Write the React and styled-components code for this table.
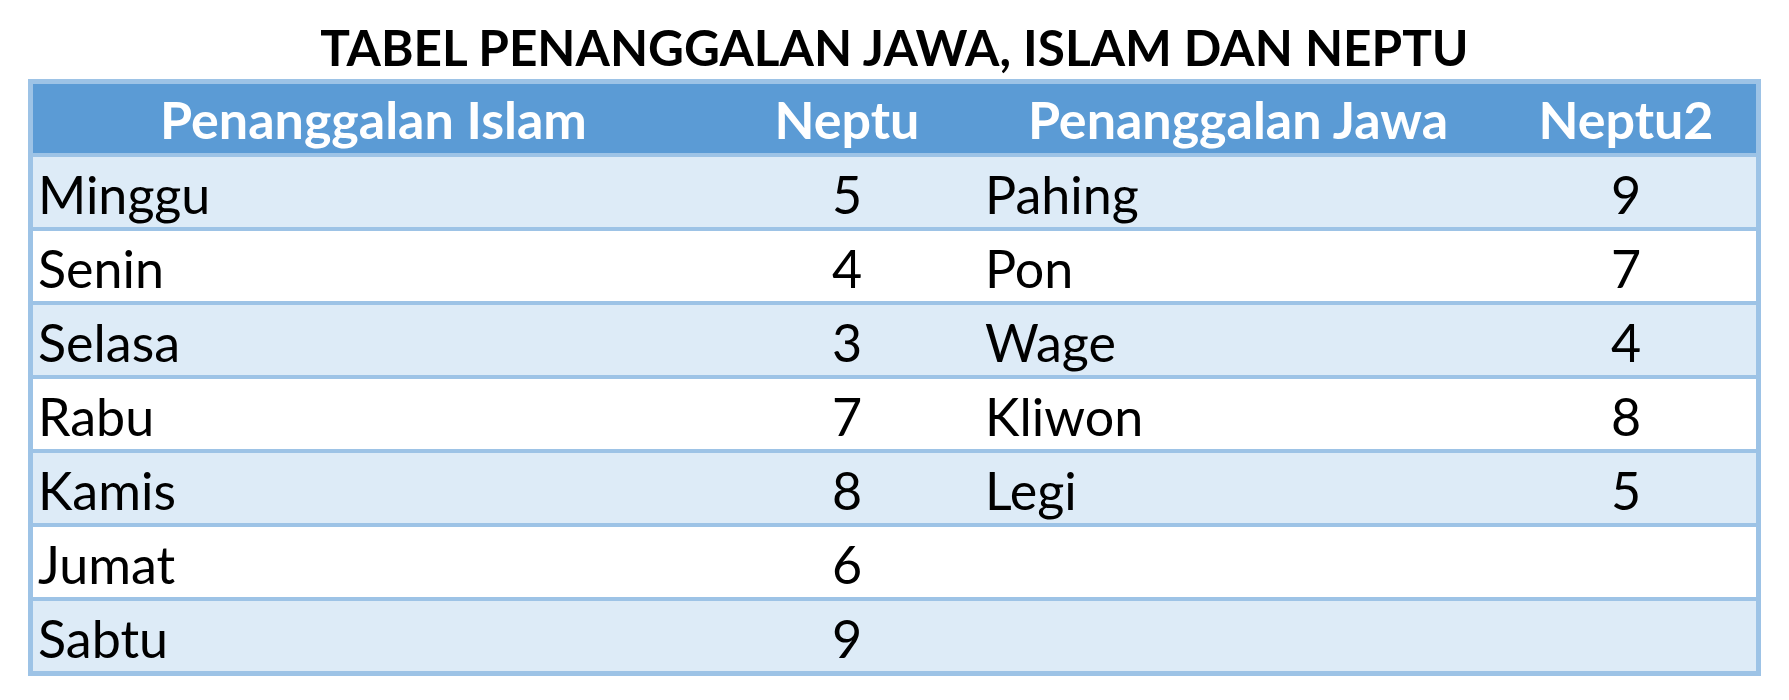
import React from 'react';
import styled, { createGlobalStyle } from 'styled-components';

const GlobalStyle = createGlobalStyle`
  html, body {
    margin: 0;
    padding: 0;
    background: #ffffff;
  }
  body {
    font-family: Lato, "Open Sans", "Liberation Sans", sans-serif;
  }
`;

const Page = styled.div`
  width: 1789px;
  padding-top: 16px;
  display: flex;
  flex-direction: column;
  align-items: center;
`;

const Title = styled.h1`
  margin: 0;
  font-size: 49.5px;
  line-height: 63px;
  font-weight: 700;
  color: #000000;
  text-align: center;
`;

const Table = styled.div`
  width: 1733px;
  box-sizing: border-box;
  border: 5px solid #9dc3e6;
  display: flex;
  flex-direction: column;
`;

const Row = styled.div`
  display: grid;
  grid-template-columns: 681px 266px 516px 1fr;
  height: ${(p) => (p.$header ? '69px' : '70px')};
  background: ${(p) => {
    if (p.$header) return '#5b9bd5';
    return p.$shade ? '#ddebf7' : '#ffffff';
  }};
  border-top: ${(p) => (p.$header ? 'none' : '4px solid #9dc3e6')};
`;

const Cell = styled.div`
  display: flex;
  align-items: center;
  justify-content: ${(p) => (p.$center ? 'center' : 'flex-start')};
  padding-left: ${(p) => (p.$center ? '0' : '5px')};
  padding-top: ${(p) => (p.$header ? '0' : '4px')};
  font-size: 52px;
  font-weight: ${(p) => (p.$header ? 700 : 400)};
  color: ${(p) => (p.$header ? '#ffffff' : '#000000')};
  white-space: nowrap;
`;

const islam = [
  ['Minggu', 5],
  ['Senin', 4],
  ['Selasa', 3],
  ['Rabu', 7],
  ['Kamis', 8],
  ['Jumat', 6],
  ['Sabtu', 9],
];

const jawa = [
  ['Pahing', 9],
  ['Pon', 7],
  ['Wage', 4],
  ['Kliwon', 8],
  ['Legi', 5],
];

const App = () => (
  <>
    <GlobalStyle />
    <Page>
      <Title>TABEL PENANGGALAN JAWA, ISLAM DAN NEPTU</Title>
      <Table>
        <Row $header>
          <Cell $header $center>Penanggalan Islam</Cell>
          <Cell $header $center>Neptu</Cell>
          <Cell $header $center>Penanggalan Jawa</Cell>
          <Cell $header $center>Neptu2</Cell>
        </Row>
        {islam.map(([day, neptu], i) => {
          const j = jawa[i];
          return (
            <Row key={day} $shade={i % 2 === 0}>
              <Cell>{day}</Cell>
              <Cell $center>{neptu}</Cell>
              <Cell>{j ? j[0] : ''}</Cell>
              <Cell $center>{j ? j[1] : ''}</Cell>
            </Row>
          );
        })}
      </Table>
    </Page>
  </>
);

export default App;
